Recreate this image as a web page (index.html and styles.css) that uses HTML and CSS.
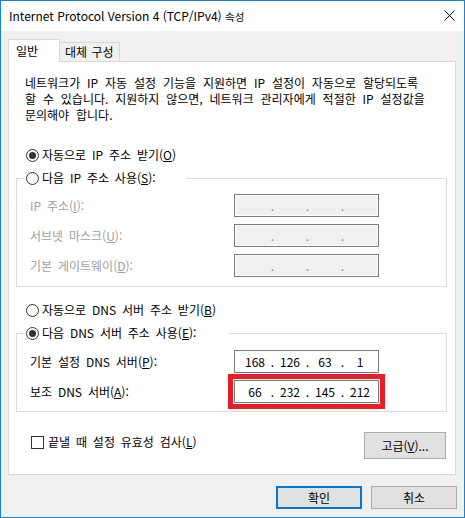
FILE: index.html
```html
<!DOCTYPE html>
<html lang="ko">
<head>
<meta charset="utf-8">
<title>Internet Protocol Version 4 (TCP/IPv4) 속성</title>
<link rel="stylesheet" href="styles.css">
</head>
<body>
<div class="window">
  <div class="titlebar">
    <span class="title">Internet Protocol Version 4 (TCP/IPv4) <span class="title-ko">속성</span></span>
    <svg class="close" width="11" height="11" viewBox="0 0 11 11"><path d="M0.5 0.5 L10.5 10.5 M10.5 0.5 L0.5 10.5" stroke="#000" stroke-width="1" fill="none"/></svg>
  </div>
  <div class="content">
    <div class="tabs">
      <div class="tab tab-active">일반</div>
      <div class="tab tab-inactive">대체 구성</div>
    </div>
    <div class="panel">
      <p class="desc">네트워크가 IP 자동 설정 기능을 지원하면 IP 설정이 자동으로 할당되도록<br>할 수 있습니다. 지원하지 않으면, 네트워크 관리자에게 적절한 IP 설정값을<br>문의해야 합니다.</p>

      <label class="radio-row first-radio"><span class="radio checked"></span><span>자동으로 IP 주소 받기(<u>O</u>)</span></label>

      <fieldset class="group group-ip">
        <legend class="legend legend-ip"><span class="radio"></span><span>다음 IP 주소 사용(<u>S</u>):</span></legend>
        <div class="field-grid">
          <span class="label disabled">IP 주소(<u>I</u>):</span>
          <div class="ipbox ipbox-disabled"><span class="seg"></span><span class="dot">.</span><span class="seg"></span><span class="dot">.</span><span class="seg"></span><span class="dot">.</span><span class="seg"></span></div>
          <span class="label disabled">서브넷 마스크(<u>U</u>):</span>
          <div class="ipbox ipbox-disabled"><span class="seg"></span><span class="dot">.</span><span class="seg"></span><span class="dot">.</span><span class="seg"></span><span class="dot">.</span><span class="seg"></span></div>
          <span class="label disabled">기본 게이트웨이(<u>D</u>):</span>
          <div class="ipbox ipbox-disabled"><span class="seg"></span><span class="dot">.</span><span class="seg"></span><span class="dot">.</span><span class="seg"></span><span class="dot">.</span><span class="seg"></span></div>
        </div>
      </fieldset>

      <label class="radio-row dns-radio"><span class="radio"></span><span>자동으로 DNS 서버 주소 받기(<u>B</u>)</span></label>

      <fieldset class="group group-dns">
        <legend class="legend legend-dns"><span class="radio checked"></span><span>다음 DNS 서버 주소 사용(<u>E</u>):</span></legend>
        <div class="field-grid">
          <span class="label">기본 설정 DNS 서버(<u>P</u>):</span>
          <div class="ipbox"><span class="seg">168</span><span class="dot">.</span><span class="seg">126</span><span class="dot">.</span><span class="seg">63</span><span class="dot">.</span><span class="seg">1</span></div>
          <span class="label">보조 DNS 서버(<u>A</u>):</span>
          <div class="ipbox highlighted"><span class="seg">66</span><span class="dot">.</span><span class="seg">232</span><span class="dot">.</span><span class="seg">145</span><span class="dot">.</span><span class="seg">212</span></div>
        </div>
      </fieldset>

      <div class="bottom-row">
        <label class="check-row"><span class="checkbox"></span><span>끝낼 때 설정 유효성 검사(<u>L</u>)</span></label>
        <button class="btn btn-adv">고급(<u>V</u>)...</button>
      </div>
    </div>
    <div class="buttons">
      <button class="btn btn-main btn-default">확인</button>
      <button class="btn btn-main">취소</button>
    </div>
  </div>
</div>
</body>
</html>
```
FILE: styles.css
```css
* { box-sizing: border-box; }
html, body { margin: 0; padding: 0; }
body {
  font-family: "Noto Sans CJK KR", "Noto Sans", sans-serif;
  font-size: 12px;
  color: #000;
  background: #fff;
}
u { text-decoration: underline; text-underline-offset: 1px; }

.window {
  width: 465px;
  height: 518px;
  border: 1px solid #1883d7;
  background: #f0f0f0;
  display: flex;
  flex-direction: column;
}

.titlebar {
  height: 30px;
  flex: none;
  background: #fff;
  display: flex;
  align-items: center;
  justify-content: space-between;
  padding: 0 9px 0 8px;
}
.title { line-height: 16px; white-space: nowrap; }
.title-ko { font-size: 10.5px; }
.close { display: block; margin-top: -1px; }

.content {
  flex: 1;
  padding: 8px 8px 0 7px;
  display: flex;
  flex-direction: column;
}

.tabs {
  display: flex;
  align-items: flex-end;
  height: 23px;
  margin-bottom: -1px;
  position: relative;
  z-index: 1;
}
.tab {
  line-height: 16px;
  white-space: nowrap;
}
.tab-active {
  width: 52px;
  height: 23px;
  background: #fff;
  border: 1px solid #d9d9d9;
  border-bottom: none;
  padding: 3px 0 0 7px;
}
.tab-inactive {
  width: 60px;
  height: 19px;
  margin-bottom: 1px;
  background: #f0f0f0;
  border: 1px solid #d9d9d9;
  border-left: none;
  border-bottom: none;
  padding: 1px 0 0 5px;
  word-spacing: 1px;
}

.panel {
  flex: none;
  height: 414px;
  background: #fff;
  border: 1px solid #d9d9d9;
  padding: 0 8px 0 7px;
  display: flex;
  flex-direction: column;
  word-spacing: 2.5px;
}

.desc {
  margin: 13px 0 0 9px;
  line-height: 16px;
  white-space: nowrap;
  word-spacing: 3.5px;
}

.radio-row {
  display: flex;
  align-items: center;
  gap: 3px;
  height: 16px;
  line-height: 16px;
  margin-left: 10px;
  white-space: nowrap;
}
.first-radio { margin-top: 24px; }
.dns-radio { margin-top: 15px; }

.radio {
  width: 13px;
  height: 13px;
  flex: none;
  border: 1px solid #333;
  border-radius: 50%;
  background: #fff;
  display: flex;
  align-items: center;
  justify-content: center;
}
.radio.checked::after {
  content: "";
  width: 7px;
  height: 7px;
  border-radius: 50%;
  background: #333;
}

.group {
  margin: 7px 0 0 0;
  border: 1px solid #dcdcdc;
  padding: 8px 0 9px 13px;
  min-width: 0;
}
.group-dns { padding-top: 9px; padding-bottom: 8px; }
.legend {
  display: flex;
  align-items: center;
  gap: 3px;
  height: 16px;
  line-height: 16px;
  margin-left: -5px;
  padding: 0 0 0 1px;
  white-space: nowrap;
}
.legend-ip { width: 161px; }
.legend-dns { width: 204px; }

.field-grid {
  display: grid;
  grid-template-columns: 204px 145px;
  row-gap: 7px;
  align-items: center;
}
.label { line-height: 16px; white-space: nowrap; }
.label.disabled { color: #a0a0a0; }

.ipbox {
  height: 23px;
  border: 1px solid #7a7a7a;
  background: #fff;
  display: flex;
  align-items: center;
  padding-left: 6px;
  line-height: 16px;
  word-spacing: 0;
}
.ipbox-disabled {
  background: #f0f0f0;
  box-shadow: inset 0 0 0 1px #fff;
  color: #8a8a8a;
}
.seg { width: 28px; text-align: center; }
.dot { width: 7px; text-align: center; }
.highlighted {
  outline: 5px solid #ec1c24;
  outline-offset: 1px;
}

.bottom-row {
  margin-top: 20px;
  display: flex;
  justify-content: space-between;
  align-items: flex-start;
}
.check-row {
  display: flex;
  align-items: center;
  gap: 4px;
  height: 16px;
  line-height: 16px;
  margin: 2px 0 0 15px;
  white-space: nowrap;
}
.checkbox {
  width: 13px;
  height: 13px;
  flex: none;
  border: 1px solid #333;
  background: #fff;
}

.btn {
  font-family: inherit;
  font-size: 12px;
  color: #000;
  background: #e1e1e1;
  border: 1px solid #adadad;
  padding: 0;
  line-height: 16px;
  white-space: nowrap;
  word-spacing: 0;
}
.btn-adv {
  width: 82px;
  height: 27px;
  margin-right: 1px;
}

.buttons {
  margin-top: 11px;
  display: flex;
  justify-content: flex-end;
  gap: 9px;
  margin-right: -1px;
}
.btn-main {
  width: 86px;
  height: 23px;
}
.btn-default {
  border: 2px solid #0078d7;
}
```
